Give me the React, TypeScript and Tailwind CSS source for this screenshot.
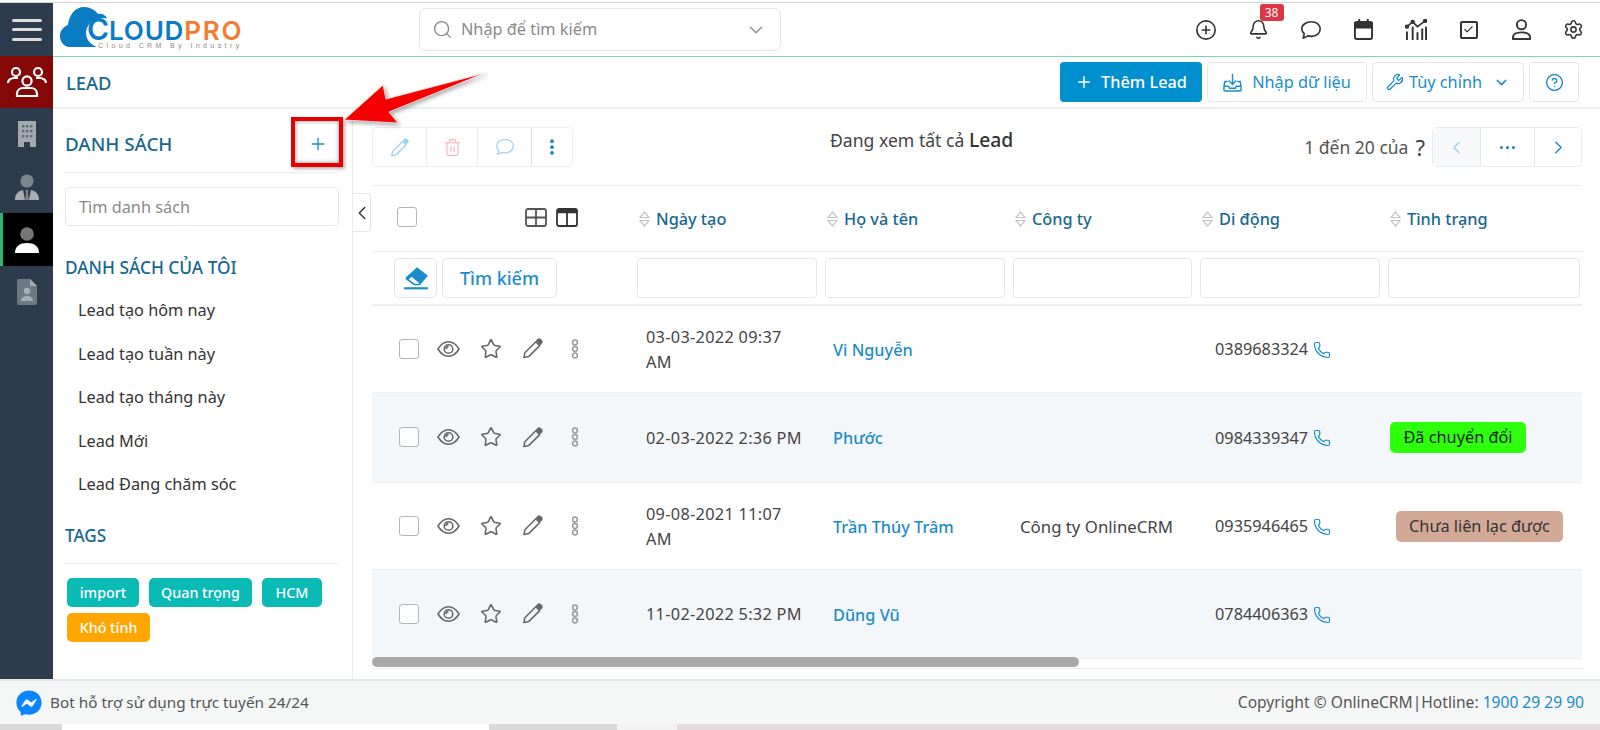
import {
  Bell,
  Check,
  ChevronDown,
  ChevronLeft,
  ChevronRight,
  CircleHelp,
  CirclePlus,
  EllipsisVertical,
  Phone,
  Plus,
  Search,
  Settings,
  Star,
  Trash2,
  Wrench,
} from 'lucide-react';
import { FaFacebookMessenger } from 'react-icons/fa';

const lists = ['Lead tạo hôm nay', 'Lead tạo tuần này', 'Lead tạo tháng này', 'Lead Mới', 'Lead Đang chăm sóc'];

const columns = [
  { label: 'Ngày tạo', width: 'w-[188px]' },
  { label: 'Họ và tên', width: 'w-[188px]' },
  { label: 'Công ty', width: 'w-[187px]' },
  { label: 'Di động', width: 'w-[188px]' },
  { label: 'Tình trạng', width: 'w-[200px]' },
];

const rows = [
  { date: '03-03-2022 09:37 AM', name: 'Vi Nguyễn', company: '', phone: '0389683324', height: 'h-[87px]', striped: false, status: null },
  {
    date: '02-03-2022 2:36 PM',
    name: 'Phước',
    company: '',
    phone: '0984339347',
    height: 'h-[90px]',
    striped: true,
    status: { label: 'Đã chuyển đổi', className: 'ml-[6px] w-[136px] bg-[#2dff0d] text-[#222]' },
  },
  {
    date: '09-08-2021 11:07 AM',
    name: 'Trần Thúy Trâm',
    company: 'Công ty OnlineCRM',
    phone: '0935946465',
    height: 'h-[87px]',
    striped: false,
    status: { label: 'Chưa liên lạc được', className: 'ml-[12px] w-[167px] bg-[#d2a996] text-[#333]' },
  },
  { date: '11-02-2022 5:32 PM', name: 'Dũng Vũ', company: '', phone: '0784406363', height: 'h-[89px]', striped: true, status: null },
];

function Logo() {
  return (
    <div className="relative h-[46px] w-[190px]">
      <svg viewBox="0 0 60 40" className="absolute left-0 top-0 h-[40px] w-[60px]">
        <path d="M10 40C4 40 0 35 0 29c0-5 3-9 8-11C9 8 15 0 24 0c6 0 11 3 14 7 5-1 9 2 10 7L40 40Z" fill="#0a7cc4" />
        <ellipse cx="43" cy="26" rx="17" ry="15" fill="#fff" />
      </svg>
      <div className="absolute left-[27px] top-[11px] whitespace-nowrap font-['Inter',sans-serif] text-[26px] font-semibold leading-[22px]">
        <span className="text-[30px] text-[#0a7cc4]">C</span>
        <span className="tracking-[0.800px] text-[#0a7cc4]">LOUD</span>
        <span className="tracking-[1.800px] text-[#f47b2f]">PRO</span>
      </div>
      <div className="absolute left-[38px] top-[35px] whitespace-nowrap font-['Liberation_Sans',sans-serif] text-[7px] leading-[7px] tracking-[3.400px] text-[#8a8a8a]">
        Cloud CRM By Industry
      </div>
    </div>
  );
}

function PeopleIcon() {
  return (
    <svg viewBox="0 0 40 32" className="h-[32px] w-[40px]" fill="none" stroke="#fff" strokeWidth="2.2">
      <circle cx="9" cy="6" r="4" />
      <circle cx="31" cy="6" r="4" />
      <circle cx="20" cy="15" r="4.6" />
      <path d="M1 17c0-3 3-5 6-5h4M39 17c0-3-3-5-6-5h-4" />
      <path d="M10 30v-2c0-4 3-6 6-6h8c3 0 6 2 6 6v2Z" />
    </svg>
  );
}

function BuildingIcon() {
  return (
    <svg viewBox="0 0 20 26" className="h-[26px] w-[20px]">
      <path d="M1 0h18v26h-6v-5H7v5H1Z" fill="#a4a9ad" />
      <g fill="#5f6b75">
        <rect x="5" y="4" width="2.4" height="2.4" />
        <rect x="9" y="4" width="2.4" height="2.4" />
        <rect x="13" y="4" width="2.4" height="2.4" />
        <rect x="5" y="9" width="2.4" height="2.4" />
        <rect x="9" y="9" width="2.4" height="2.4" />
        <rect x="13" y="9" width="2.4" height="2.4" />
        <rect x="5" y="14" width="2.4" height="2.4" />
        <rect x="9" y="14" width="2.4" height="2.4" />
        <rect x="13" y="14" width="2.4" height="2.4" />
      </g>
    </svg>
  );
}

function AgentIcon() {
  return (
    <svg viewBox="0 0 24 26" className="h-[26px] w-[24px]">
      <circle cx="12" cy="7" r="6.6" fill="#7d858c" />
      <path d="M0 26c0-6 3-9 8-10l2 10ZM24 26c0-6-3-9-8-10l-2 10Z" fill="#a9adb1" />
      <path d="M10.6 16h2.8l-.5 3 1 7h-3.800l1-7Z" fill="#7d858c" />
    </svg>
  );
}

function UserSolidIcon() {
  return (
    <svg viewBox="0 0 24 26" className="h-[26px] w-[24px]">
      <circle cx="12" cy="7" r="6.8" fill="#777" />
      <path d="M0 26c0-7 5-10 12-10s12 3 12 10Z" fill="#fff" />
    </svg>
  );
}

function FileUserIcon() {
  return (
    <svg viewBox="0 0 20 26" className="h-[26px] w-[20px]">
      <path d="M2 0h11l7 7v17a2 2 0 0 1-2 2H2a2 2 0 0 1-2-2V2a2 2 0 0 1 2-2Z" fill="#6d7882" />
      <path d="M13 0l7 7h-7Z" fill="#a5abb0" />
      <circle cx="10" cy="12" r="3.200" fill="#a9adb1" />
      <path d="M4 22c0-3 2-5 6-5s6 2 6 5Z" fill="#a9adb1" />
    </svg>
  );
}

function ChatIcon({ size = 22, width = 1.8 }: { size?: number; width?: number }) {
  return (
    <svg viewBox="0 0 24 22" width={size} height={size} fill="none" stroke="currentColor" strokeWidth={width} strokeLinejoin="round">
      <path d="M12.500 2C6.700 2 2 5.300 2 9.800c0 2 1 3.800 2.600 5.100L3.500 20l5.200-2.600c1.200.3 2.500.5 3.800.5 5.700 0 9.500-3.500 9.500-8S18.200 2 12.500 2Z" />
    </svg>
  );
}

function CalendarFilledIcon() {
  return (
    <svg viewBox="0 0 20 22" className="h-[21px] w-[19px]" fill="none" stroke="#333" strokeWidth="2">
      <rect x="1" y="3" width="18" height="18" rx="2" />
      <path d="M1 4h18v5H1Z" fill="#333" />
      <path d="M5.500 0v4M14.500 0v4" />
    </svg>
  );
}

function ChartIcon() {
  return (
    <svg viewBox="0 0 24 22" className="h-[21px] w-[23px]" fill="none" stroke="#333" strokeWidth="2">
      <path d="M2 8l6-5 5 5 8-6" strokeWidth="1.800" />
      <circle cx="2" cy="8" r="1.300" fill="#333" />
      <circle cx="8" cy="3" r="1.300" fill="#333" />
      <circle cx="21" cy="2" r="1.300" fill="#333" />
      <path d="M2 13v9M8 8v14M13 14v8M18 10v12M22 8v14" />
    </svg>
  );
}

function CheckSquareIcon() {
  return (
    <div className="flex h-[18px] w-[18px] items-center justify-center rounded-[2px] border-2 border-[#333]">
      <Check size={11} strokeWidth={2.5} color="#333" />
    </div>
  );
}

function PersonIcon() {
  return (
    <svg viewBox="0 0 22 22" className="h-[21px] w-[21px]" fill="none" stroke="#333" strokeWidth="2">
      <circle cx="11" cy="6" r="4.800" />
      <path d="M2 21v-1.500C2 15.500 6 14 11 14s9 1.500 9 5.500V21Z" strokeLinejoin="round" />
    </svg>
  );
}

function ImportIcon() {
  return (
    <svg viewBox="0 0 20 20" className="h-[19px] w-[19px]" fill="none" stroke="#1a8ccc" strokeWidth="1.500">
      <path d="M10 1v11M6 8l4 4 4-4" />
      <path d="M5 9H2l-1 5v4a1 1 0 0 0 1 1h16a1 1 0 0 0 1-1v-4l-1-5h-3M1 14h5l1 2h6l1-2h5" />
    </svg>
  );
}

function GridIcon() {
  return (
    <svg viewBox="0 0 22 19" className="h-[19px] w-[22px]" fill="none" stroke="#555" strokeWidth="1.800">
      <rect x="1" y="1" width="20" height="17" rx="2" />
      <path d="M11 1v17M1 9.500h20" />
    </svg>
  );
}

function ColumnsIcon() {
  return (
    <svg viewBox="0 0 22 19" className="h-[19px] w-[22px]" fill="none" stroke="#333" strokeWidth="1.800">
      <rect x="1" y="1" width="20" height="17" rx="2" />
      <path d="M1 3.500h20" strokeWidth="3.500" />
      <path d="M11 4v14" />
    </svg>
  );
}

function EraserIcon() {
  return (
    <svg viewBox="0 0 24 22" className="h-[24px] w-[26px]">
      <path d="M13 1l10 8-7 8-5 0-9-6Z" fill="#1a8ccc" />
      <path d="M8 9l8 6.500-1 1.500h-4.500L3.800 12.200Z" fill="#fff" stroke="#1a8ccc" strokeWidth="1.600" />
      <path d="M1 20.500h22" stroke="#1a8ccc" strokeWidth="2" />
    </svg>
  );
}

function SortIcon() {
  return (
    <svg viewBox="0 0 11 16" className="h-[16px] w-[11px] shrink-0" fill="none" stroke="#c4c4c4" strokeWidth="1.200">
      <path d="M1 6.500 5.500 1 10 6.500ZM1 9.500 5.500 15 10 9.500Z" />
    </svg>
  );
}

function RingDots() {
  return (
    <svg viewBox="0 0 8 20" className="h-[20px] w-[8px]" fill="none" stroke="#9a9a9a" strokeWidth="1.500">
      <circle cx="4" cy="3.500" r="2.400" />
      <circle cx="4" cy="10" r="2.400" />
      <circle cx="4" cy="16.500" r="2.400" />
    </svg>
  );
}

function EyeIcon() {
  return (
    <svg viewBox="0 0 24 18" className="ml-[18px] h-[18px] w-[23px]" fill="none" stroke="currentColor" strokeWidth="1.600">
      <path d="M1 9c3-5 7-7.500 11-7.500S20 4 23 9c-3 5-7 7.500-11 7.500S4 14 1 9Z" />
      <circle cx="12" cy="9" r="4.500" />
      <path d="M9.500 9A2.500 2.500 0 0 1 12 6.500" strokeWidth="2" />
    </svg>
  );
}

function PencilIcon({ className }: { className?: string }) {
  return (
    <svg viewBox="0 0 22 22" className={className} fill="none" stroke="currentColor" strokeWidth="1.600" strokeLinejoin="round">
      <path d="M2 20.500l1-5L14.500 4l4 4L7 19.500Z" />
      <path d="M15.500 3l1.500-1.500a1.500 1.500 0 0 1 2 0l1.500 1.500a1.500 1.500 0 0 1 0 2L19 6.500Z" fill="currentColor" />
    </svg>
  );
}

function CheckBox() {
  return <div className="h-[20px] w-[20px] rounded-[3px] border border-[#b5b5b5] bg-white/70" />;
}

function HeaderIcons() {
  return (
    <div className="flex items-center text-[#333]">
      <span className="flex w-[52.500px] justify-center"><CirclePlus size={22} strokeWidth={1.800} /></span>
      <span className="relative flex w-[52.500px] justify-center">
        <Bell size={21} strokeWidth={1.800} />
        <span className="absolute left-[27px] top-[-15px] flex h-[17px] w-[24px] items-center justify-center rounded-[3px] bg-[#dc3545] text-[12px] leading-none text-white">
          38
        </span>
      </span>
      <span className="flex w-[52.500px] justify-center"><ChatIcon /></span>
      <span className="flex w-[52.500px] justify-center"><CalendarFilledIcon /></span>
      <span className="flex w-[52.500px] justify-center"><ChartIcon /></span>
      <span className="flex w-[52.500px] justify-center"><CheckSquareIcon /></span>
      <span className="flex w-[52.500px] justify-center"><PersonIcon /></span>
      <span className="flex w-[52.500px] justify-center"><Settings size={21} strokeWidth={1.800} /></span>
    </div>
  );
}

export default function App() {
  return (
    <div className="relative flex h-[730px] w-[1600px] flex-col overflow-hidden bg-white font-['Noto_Sans',sans-serif] text-[16.300px] text-[#444]">
      <div className="h-[3px] shrink-0 border-b border-[#d4d4d4] bg-white" />

      <div className="flex min-h-0 flex-1">
        {/* icon rail */}
        <nav className="flex w-[53px] shrink-0 flex-col bg-[#2c3c4c]">
          <div className="flex h-[53px] flex-col items-center justify-center gap-[6.500px]">
            <span className="h-[3px] w-[30px] rounded bg-[#dcdcdc]" />
            <span className="h-[3px] w-[30px] rounded bg-[#dcdcdc]" />
            <span className="h-[3px] w-[30px] rounded bg-[#dcdcdc]" />
          </div>
          <div className="flex h-[52px] items-center justify-center bg-[#840808]"><PeopleIcon /></div>
          <div className="flex h-[52px] items-center justify-center"><BuildingIcon /></div>
          <div className="flex h-[53px] items-center justify-center"><AgentIcon /></div>
          <div className="flex h-[53px] items-center justify-center border-l-[3px] border-[#2bb673] bg-black pr-[3px]"><UserSolidIcon /></div>
          <div className="flex h-[52px] items-center justify-center"><FileUserIcon /></div>
        </nav>

        <div className="flex min-w-0 flex-1 flex-col">
          {/* top bar */}
          <header className="flex h-[54px] shrink-0 items-center border-b border-[#7fd6a6] pl-[7px]">
            <Logo />
            <div className="ml-[169px] flex h-[43px] w-[362px] items-center rounded-[6px] border border-[#e4e6e8] pl-[12px] pr-[13px] text-[#8a8a8a]">
              <Search size={21} strokeWidth={1.600} color="#8f8f8f" />
              <span className="ml-[8px]">Nhập để tìm kiếm</span>
              <ChevronDown size={22} strokeWidth={1.500} color="#8f8f8f" className="ml-auto" />
            </div>
            <div className="ml-auto"><HeaderIcons /></div>
          </header>

          {/* page title */}
          <div className="flex h-[52px] shrink-0 items-center border-b-2 border-[#eeeeee] pl-[13px] pr-[21px]">
            <span className="pt-[1px] text-[18.400px] font-medium text-[#17688f]">LEAD</span>
            <div className="ml-auto flex items-center gap-[5px]">
              <button className="flex h-[40px] w-[142px] items-center justify-center gap-[8px] rounded-[4px] bg-[#0090d0] font-medium text-white">
                <Plus size={18} strokeWidth={2} />
                Thêm Lead
              </button>
              <button className="flex h-[40px] w-[160px] items-center justify-center gap-[10px] rounded-[4px] border border-[#e4e6e8] text-[#1a8ccc]">
                <ImportIcon />
                Nhập dữ liệu
              </button>
              <button className="flex h-[40px] w-[152px] items-center justify-center gap-[5px] rounded-[4px] border border-[#e4e6e8] text-[#1a8ccc]">
                <Wrench size={18} strokeWidth={1.700} />
                Tùy chỉnh
                <ChevronDown size={17} strokeWidth={2} className="ml-[6px]" />
              </button>
              <button className="flex h-[40px] w-[50px] items-center justify-center rounded-[4px] border border-[#e4e6e8] text-[#1a8ccc]">
                <CircleHelp size={19} strokeWidth={1.800} />
              </button>
            </div>
          </div>

          <div className="flex min-h-0 flex-1">
            {/* list panel */}
            <aside className="w-[300px] shrink-0 border-r border-[#e9ecef] pl-[12px] pr-[13px]">
              <div className="flex h-[64px] items-center justify-between border-b border-[#eeeeee] pt-[7px]">
                <span className="text-[18.800px] font-medium text-[#17688f]">DANH SÁCH</span>
                <Plus size={20} strokeWidth={1.600} color="#1a8ccc" className="mr-[11px]" />
              </div>
              <div className="mt-[14px] flex h-[39px] items-center rounded-[5px] border border-[#e4e6e8] pl-[13px] pt-[1px] text-[#8a8a8a]">
                Tìm danh sách
              </div>
              <div className="mt-[30px] text-[17.300px] font-medium leading-[24px] text-[#17688f]">DANH SÁCH CỦA TÔI</div>
              <ul className="mt-[9px]">
                {lists.map((item) => (
                  <li key={item} className="flex h-[43.400px] items-center pl-[13px] text-[#333]">
                    {item}
                  </li>
                ))}
              </ul>
              <div className="mt-[18px] border-b border-[#eeeeee] pb-[15px] text-[17.100px] font-medium leading-[24px] text-[#17688f]">TAGS</div>
              <div className="mt-[14px] flex flex-wrap gap-x-[10px] gap-y-[6px] pl-[2px] text-[14.300px] font-medium text-white">
                <span className="flex h-[29px] w-[72px] items-center justify-center rounded-[5px] bg-[#0abab5]">import</span>
                <span className="flex h-[29px] w-[103px] items-center justify-center rounded-[5px] bg-[#0abab5]">Quan trọng</span>
                <span className="flex h-[29px] w-[60px] items-center justify-center rounded-[5px] bg-[#0abab5]">HCM</span>
                <span className="flex h-[29px] w-[83px] items-center justify-center rounded-[5px] bg-[#ffa700]">Khó tính</span>
              </div>
            </aside>

            {/* lead table */}
            <main className="relative min-w-0 flex-1 pl-[19px] pr-[18px]">
              <button className="absolute left-0 top-[84px] flex h-[39px] w-[18px] items-center justify-center rounded-r-[4px] border border-l-0 border-[#e4e6e8] bg-white">
                <ChevronLeft size={22} strokeWidth={1.600} color="#333" className="shrink-0" />
              </button>

              <div className="flex h-[77px] items-start border-b border-[#eeeeee] pt-[18px]">
                <div className="flex h-[40px] w-[201px] rounded-[5px] border border-[#eceef0]">
                  <span className="flex w-[54px] items-center justify-center border-r border-[#eceef0] text-[#9fd3ef]">
                    <PencilIcon className="h-[19px] w-[19px]" />
                  </span>
                  <span className="flex w-[51px] items-center justify-center border-r border-[#eceef0] text-[#f7b4bd]">
                    <Trash2 size={19} strokeWidth={1.500} />
                  </span>
                  <span className="flex w-[54px] items-center justify-center border-r border-[#dfe2e5] text-[#9fd3ef]">
                    <ChatIcon size={20} width={1.5} />
                  </span>
                  <span className="flex flex-1 items-center justify-center text-[#1a7fbb]">
                    <EllipsisVertical size={20} strokeWidth={2.500} />
                  </span>
                </div>
                <div className="ml-[257px] mt-[-2px] text-[17.600px] leading-[30px] text-[#444]">
                  Đang xem tất cả <span className="text-[19.300px] font-medium text-[#333]">Lead</span>
                </div>
                <div className="ml-auto flex items-center">
                  <span className="text-[17.500px] text-[#555]">1 đến 20 của</span>
                  <span className="ml-[7px] text-[22px] leading-[26px] text-[#444]">?</span>
                  <div className="ml-[7px] flex h-[40px] w-[150px] rounded-[5px] border border-[#e9ecef]">
                    <span className="flex w-[48px] items-center justify-center border-r border-[#e4e6e8] bg-[#f8f9fa] text-[#9fd3ef]">
                      <ChevronLeft size={21} strokeWidth={1.700} />
                    </span>
                    <span className="flex w-[54px] items-center justify-center gap-[3px] border-r border-[#e4e6e8]">
                      <i className="h-[3px] w-[3px] rounded-full bg-[#1a7fbb]" />
                      <i className="h-[3px] w-[3px] rounded-full bg-[#1a7fbb]" />
                      <i className="h-[3px] w-[3px] rounded-full bg-[#1a7fbb]" />
                    </span>
                    <span className="flex flex-1 items-center justify-center text-[#1a8ccc]">
                      <ChevronRight size={21} strokeWidth={1.700} />
                    </span>
                  </div>
                </div>
              </div>

              <div className="overflow-hidden">
                <div className="w-[1230px]">
                  {/* column titles */}
                  <div className="flex h-[66px] items-center border-b border-[#eeeeee]">
                    <div className="flex w-[261px] shrink-0 items-center pb-[3px] pl-[25px]">
                      <CheckBox />
                      <div className="ml-[108px] flex gap-[9px]">
                        <GridIcon />
                        <ColumnsIcon />
                      </div>
                    </div>
                    {columns.map((col) => (
                      <div key={col.label} className={`flex shrink-0 items-center gap-[6px] pl-[6px] pt-[1px] font-medium text-[#17688f] ${col.width}`}>
                        <SortIcon />
                        {col.label}
                      </div>
                    ))}
                  </div>

                  {/* filters */}
                  <div className="flex h-[54px] items-start border-b-2 border-[#eeeeee] pt-[6px]">
                    <div className="flex w-[261px] shrink-0 gap-[5px] pl-[22px]">
                      <button className="flex h-[40px] w-[43px] items-center justify-center rounded-[5px] border border-[#e4e6e8]">
                        <EraserIcon />
                      </button>
                      <button className="h-[40px] w-[115px] rounded-[5px] border border-[#e4e6e8] text-[18px] font-medium text-[#1a8ccc]">
                        Tìm kiếm
                      </button>
                    </div>
                    {columns.map((col) => (
                      <div key={col.label} className={`shrink-0 pl-[4px] pr-[4px] ${col.width}`}>
                        <div className="h-[40px] rounded-[4px] border border-[#e4e6e8]" />
                      </div>
                    ))}
                  </div>

                  {/* data rows */}
                  {rows.map((row) => (
                    <div
                      key={row.phone}
                      className={`flex items-center border-b border-[#f0f0f0] ${row.height} ${row.striped ? 'bg-[#f4f7fa]' : 'bg-white'}`}
                    >
                      <div className="flex w-[261px] shrink-0 items-center pb-[1px] pl-[27px] text-[#666]">
                        <CheckBox />
                        <EyeIcon />
                        <Star size={22} strokeWidth={1.700} className="ml-[20px]" />
                        <PencilIcon className="ml-[20px] h-[21px] w-[21px]" />
                        <span className="ml-[28px] flex"><RingDots /></span>
                      </div>
                      <div className="w-[188px] shrink-0 pl-[13px] pr-[15px] pt-[1px] leading-[25px] tracking-[0.300px]">{row.date}</div>
                      <div className="w-[188px] shrink-0 pl-[12px] pt-[2px] font-medium text-[#1a8ccc]">{row.name}</div>
                      <div className="w-[187px] shrink-0 whitespace-nowrap pl-[11px] pt-[1px] text-[16.800px]">{row.company}</div>
                      <div className="flex w-[188px] shrink-0 items-center gap-[5px] pl-[19px] pt-[1px]">
                        {row.phone}
                        <Phone size={18} strokeWidth={1.600} color="#1a8ccc" />
                      </div>
                      <div className="w-[200px] shrink-0">
                        {row.status && (
                          <span className={`flex h-[31px] items-center justify-center rounded-[5px] ${row.status.className}`}>
                            {row.status.label}
                          </span>
                        )}
                      </div>
                    </div>
                  ))}
                </div>
              </div>

              <div className="relative -mt-[2px] border-b border-[#eeeeee] pb-[1px]">
                <div className="h-[10px] w-[707px] rounded-[5px] bg-[#a9a9a9]" />
              </div>
            </main>
          </div>
        </div>
      </div>

      {/* footer */}
      <footer className="flex h-[45px] shrink-0 items-center border-t-2 border-[#e4e6e6] bg-[#f5f7f7] pl-[16px] pr-[16px] text-[15.300px] text-[#555]">
        <FaFacebookMessenger size={26} color="#0a84ff" />
        <span className="ml-[8px]">Bot hỗ trợ sử dụng trực tuyến 24/24</span>
        <span className="ml-auto text-[15.600px]">
          Copyright © OnlineCRM|Hotline: <span className="text-[#1a8ccc]">1900 29 29 90</span>
        </span>
      </footer>

      {/* taskbar sliver at the bottom of the capture */}
      <div className="flex h-[6px] shrink-0 bg-[#d9d9d9]">
        <div className="ml-[62px] w-[427px] bg-white" />
        <div className="ml-[128px] w-[60px] bg-[#f2f2f2]" />
        <div className="flex-1 bg-[#e6dcdf]" />
      </div>

      {/* red annotation over the add-list button */}
      <div className="absolute left-[291px] top-[117px] h-[50px] w-[52px] border-4 border-[#e60000] shadow-[inset_0_0_4px_rgba(0,0,0,0.45),2px_2px_3px_rgba(0,0,0,0.3)]" />
      <svg viewBox="0 0 150 60" className="absolute left-[340px] top-[69px] h-[60px] w-[150px] drop-shadow-[2px_2px_2px_rgba(0,0,0,0.35)]">
        <path d="M4 51 43 16l3 14 99-26-96 39 9 11Z" fill="#f50000" stroke="#f4f4f4" strokeWidth="0.800" />
      </svg>
    </div>
  );
}
